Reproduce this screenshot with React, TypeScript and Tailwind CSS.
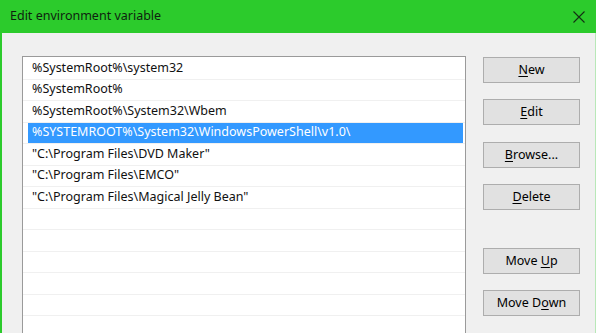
import React from 'react'

// Rows of the path list; the empty strings are blank rows at the bottom.
const ENTRIES = [
  '%SystemRoot%\\system32',
  '%SystemRoot%',
  '%SystemRoot%\\System32\\Wbem',
  '%SYSTEMROOT%\\System32\\WindowsPowerShell\\v1.0\\',
  '"C:\\Program Files\\DVD Maker"',
  '"C:\\Program Files\\EMCO"',
  '"C:\\Program Files\\Magical Jelly Bean"',
  '',
  '',
  '',
  '',
  '',
  '',
  '',
]

const SELECTED = 3

function Btn({ pre = '', hot, post = '', className = '' }: { pre?: string; hot: string; post?: string; className?: string }) {
  return (
    <button
      className={
        'flex h-[26px] w-[97px] items-center justify-center whitespace-pre border border-[#adadad] bg-[#e1e1e1] text-[12.5px] text-black ' +
        className
      }
    >
      {pre}
      <span className="underline underline-offset-2">{hot}</span>
      {post}
    </button>
  )
}

export default function App() {
  return (
    <div
      className="flex h-[333px] w-[596px] flex-col overflow-hidden"
      style={{ fontFamily: '"Noto Sans", "Open Sans", sans-serif' }}
    >
      {/* Title bar */}
      <div className="flex h-[33px] shrink-0 items-center justify-between bg-[#2ccb2c] pl-[10px] pr-[11px]">
        <span className="text-[12.5px] text-[#0f1f0f]">Edit environment variable</span>
        <svg width="12" height="12" viewBox="0 0 12 12" aria-hidden="true">
          <path d="M0.5 0.5 L11.5 11.5 M11.5 0.5 L0.5 11.5" stroke="#143014" strokeWidth="1.1" />
        </svg>
      </div>

      {/* Body */}
      <div className="flex flex-1 border-l-2 border-r border-l-[#2ccb2c] border-r-[#b8e8b8] bg-[#f0f0f0] pl-[20px] pt-[23px]">
        {/* List */}
        <div className="h-[300px] w-[444px] shrink-0 border border-[#9a9a9a] bg-white pt-px">
          {ENTRIES.map((e, i) => (
            <div
              key={i}
              className="h-[21.5px] border-b border-[#f0f0f0] pl-[5px] pr-[2px]"
            >
              <div
                className={
                  'flex h-full items-center whitespace-nowrap pl-[4px] text-[12.5px] ' +
                  (i === SELECTED ? 'bg-[#3399ff] text-white' : 'text-[#111]')
                }
              >
                {e}
              </div>
            </div>
          ))}
        </div>

        {/* Buttons */}
        <div className="ml-[17px] flex flex-col">
          <Btn className="mt-px" hot="N" post="ew" />
          <Btn className="mt-[16px]" hot="E" post="dit" />
          <Btn className="mt-[17px]" hot="B" post="rowse..." />
          <Btn className="mt-[16px]" hot="D" post="elete" />
          <Btn className="mt-[38px]" pre="Move " hot="U" post="p" />
          <Btn className="mt-[16px]" pre="Move D" hot="o" post="wn" />
        </div>
      </div>
    </div>
  )
}
